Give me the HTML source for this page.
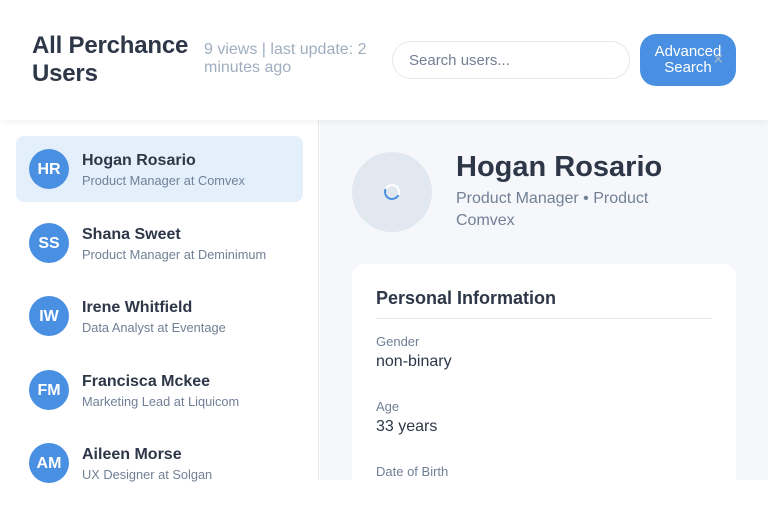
<!DOCTYPE html>
<html><head><style>
*{margin:0;padding:0;box-sizing:border-box}
body{width:768px;height:480px;overflow:hidden;background:#fff;font-family:"Liberation Sans",sans-serif;position:relative;color:#2d3748}
.hdr{position:absolute;left:0;top:0;width:768px;height:120px;background:#fff;box-shadow:0 2px 6px rgba(0,0,0,.05);z-index:2}
.title{position:absolute;left:32px;top:32px;font-size:24px;font-weight:bold;line-height:28px;color:#2d3748;letter-spacing:-0.2px}
.meta{position:absolute;left:204px;top:41px;font-size:16px;line-height:18px;color:#a0aec0;width:175px}
.search{position:absolute;left:392px;top:41px;width:238px;height:38px;border:1px solid #e2e8f0;border-radius:19px;padding-left:16px;font-size:15px;line-height:37px;color:#718096}
.btn{position:absolute;left:640px;top:34px;width:96px;height:52px;background:#4a90e2;border-radius:16px;color:#fff;font-size:15px;line-height:16px;text-align:center;padding-top:10px}
.x{position:absolute;left:713px;top:49px;color:#a0b4c8;font-size:18px}
.side{position:absolute;left:0;top:120px;width:319px;height:360px;background:#fff;border-right:1px solid #e2e8f0}
.item{position:absolute;left:16px;width:287px;height:66px;border-radius:8px}
.item.a{background:#e3f0fc}
.av{position:absolute;left:13px;top:13px;width:40px;height:40px;border-radius:50%;background:#4a90e2;color:#fff;font-weight:bold;font-size:16px;line-height:42px;text-align:center}
.nm{position:absolute;left:66px;top:16px;font-size:16px;font-weight:bold;color:#2d3748}
.jb{position:absolute;left:66px;top:37px;font-size:12.8px;color:#718096}
.main{position:absolute;left:320px;top:120px;width:448px;height:360px;background:#f5f7fa}
.pic{position:absolute;left:32px;top:32px;width:80px;height:80px;border-radius:50%;background:#e2e8f0}
.spin{position:absolute;left:32px;top:32px;width:16px;height:16px;border-radius:50%;border:2px solid #fff;border-bottom-color:#4a90e2;border-left-color:#4a90e2;transform:rotate(-20deg)}
.pn{position:absolute;left:136px;top:31px;font-size:29px;font-weight:bold;color:#2d3748}
.pj{position:absolute;left:136px;top:68px;font-size:16px;line-height:22px;color:#718096;width:220px}
.card{position:absolute;left:32px;top:144px;width:384px;height:260px;background:#fff;border-radius:12px}
.ct{position:absolute;left:24px;top:24px;width:336px;font-size:18px;font-weight:bold;padding-bottom:9px;border-bottom:1px solid #e2e8f0}
.lb{position:absolute;left:24px;font-size:13px;color:#718096}
.vl{position:absolute;left:24px;font-size:16px;color:#2d3748}
</style></head><body>
<div class="hdr">
<div class="title">All Perchance<br>Users</div>
<div class="meta">9 views | last update: 2 minutes ago</div>
<div class="search">Search users...</div>
<div class="btn">Advanced<br>Search</div>
<div class="x">×</div>
</div>
<div class="side">
<div class="item a" style="top:16px"><div class="av">HR</div><div class="nm">Hogan Rosario</div><div class="jb">Product Manager at Comvex</div></div>
<div class="item" style="top:90px"><div class="av">SS</div><div class="nm">Shana Sweet</div><div class="jb">Product Manager at Deminimum</div></div>
<div class="item" style="top:163px"><div class="av">IW</div><div class="nm">Irene Whitfield</div><div class="jb">Data Analyst at Eventage</div></div>
<div class="item" style="top:237px"><div class="av">FM</div><div class="nm">Francisca Mckee</div><div class="jb">Marketing Lead at Liquicom</div></div>
<div class="item" style="top:310px"><div class="av">AM</div><div class="nm">Aileen Morse</div><div class="jb">UX Designer at Solgan</div></div>
</div>
<div class="main">
<div class="pic"><div class="spin"></div></div>
<div class="pn">Hogan Rosario</div>
<div class="pj">Product Manager • Product Comvex</div>
<div class="card">
<div class="ct">Personal Information</div>
<div class="lb" style="top:70px">Gender</div><div class="vl" style="top:89px">non-binary</div>
<div class="lb" style="top:135px">Age</div><div class="vl" style="top:154px">33 years</div>
<div class="lb" style="top:200px">Date of Birth</div>
</div>
</div>
</body></html>
